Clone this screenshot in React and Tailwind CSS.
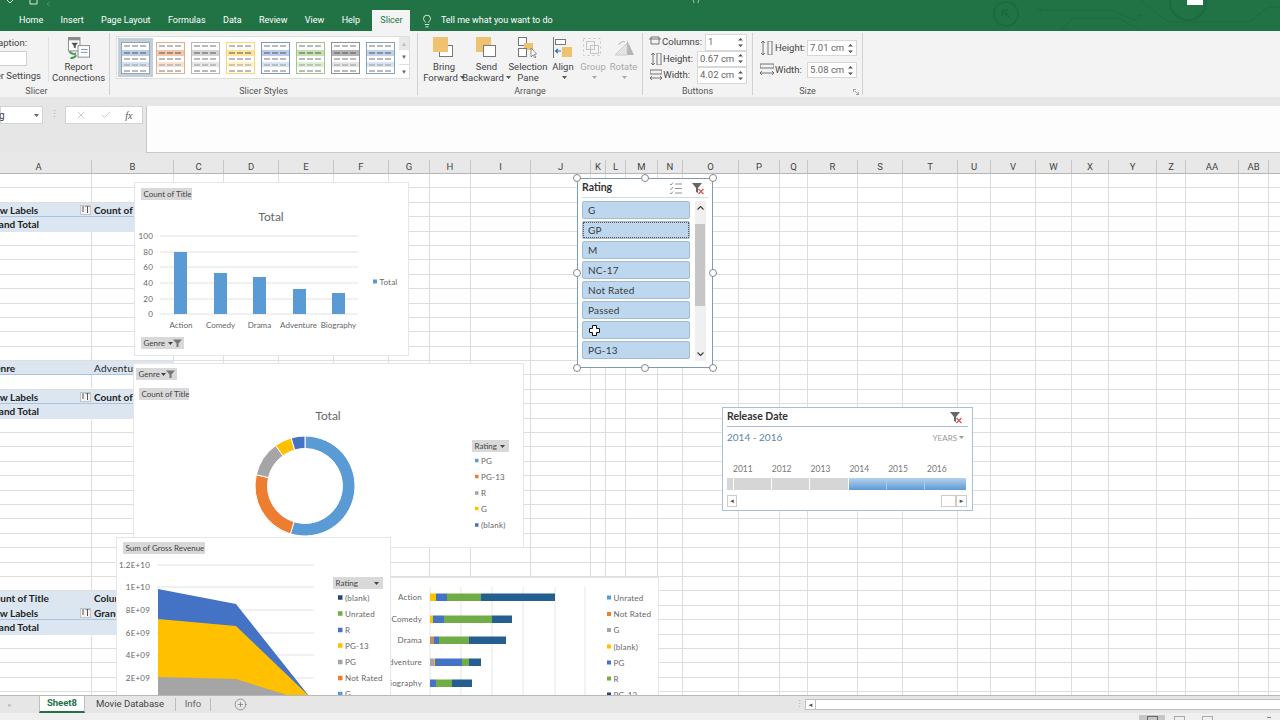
import { CirclePlus, Check, Lightbulb, X } from "lucide-react";

const COLUMNS = ["A","B","C","D","E","F","G","H","I","J","K","L","M","N","O","P","Q","R","S","T","U","V","W","X","Y","Z","AA","AB","AC"];
const gridCols = "grid-cols-[106px_82px_50px_55px_55px_55px_41px_41px_60px_60px_15px_20px_32px_25px_56px_41px_28px_50px_45px_55px_33px_45px_36px_37px_48px_29px_53px_30px_60px]";

const ROW_COUNT = 37;
const pivotRows = {
  2: { a: "Row Labels", b: "Count of Title", filter: true, line: true },
  3: { a: "Grand Total" },
  13: { a: "Genre", b: "Adventure", plain: true, line: true },
  15: { a: "Row Labels", b: "Count of Title", filter: true, line: true },
  16: { a: "Grand Total" },
  29: { a: "Count of Title", b: "Column Labels", narrow: true },
  30: { a: "Row Labels", b: "Grand Total", filter: true, line: true, narrow: true },
  31: { a: "Grand Total" },
};

const swatches = [
  ["#8fa5bb", "#b9cde3", "#d5e0ec"],
  ["#e8ae8a", "#f3c6aa", "#f8e2d4"],
  ["#b9b9b9", "#d4d4d4", "#e6e6e6"],
  ["#fbd56f", "#fde49b", "#fdf0cb"],
  ["#7896c4", "#b9cdea", "#d9e4f3"],
  ["#a3c48c", "#c6e0b4", "#e0eed6"],
  ["#8f8f8f", "#b5b5b5", "#e4e4e4"],
  ["#83a2c8", "#bed2ea", "#d9e5f2"],
];

const ratingItems = ["G", "GP", "M", "NC-17", "Not Rated", "Passed", "", "PG-13"];

function ribbonText(extra) {
  return `text-[9.5px] leading-[11px] text-[#444] ${extra}`;
}

function Swatch({ border, mid, light }) {
  const dash = (y, color) => (
    <line x1="3" x2="26" y1={y} y2={y} stroke={color} strokeWidth="1" strokeDasharray="6 2" />
  );
  return (
    <svg width="29" height="32" viewBox="0 0 29 32">
      <rect x="0.5" y="0.5" width="28" height="31" fill="#fff" stroke={border} />
      <rect x="1" y="8" width="27" height="6" fill={mid} />
      <rect x="1" y="20" width="27" height="5" fill={light} />
      {dash(4, "#777")}
      {dash(11, "#555")}
      {dash(17, "#777")}
      {dash(23, "#999")}
      {dash(29, "#777")}
    </svg>
  );
}

function ClearFilterIcon({ className }) {
  return (
    <svg className={className} width="13" height="13" viewBox="0 0 13 13">
      <path d="M0 1h10L6 6v5L4 10V6z" fill="#666" />
      <path d="M6.5 7l5 5M11.5 7l-5 5" stroke="#d9534f" strokeWidth="1.2" />
    </svg>
  );
}

function MultiSelectIcon() {
  return (
    <svg width="12" height="12" viewBox="0 0 12 12" fill="none" stroke="#888" strokeWidth="0.9">
      <path d="M0 2l1 1 2-2.5M0 6.5l1 1 2-2.5M0 11l1 1 2-2.5M5 2h7M5 6.5h7M5 11h7" />
    </svg>
  );
}

function Spinner({ value, className }) {
  return (
    <div className={`flex items-center justify-between border border-[#d8d8d8] bg-white pl-[2px] pr-[3px] ${className}`}>
      <span className="text-[9.5px] text-[#666]">{value}</span>
      <svg width="5" height="11" viewBox="0 0 5 11" fill="#555">
        <path d="M2.5 1L5 3.5H0zM2.5 10L0 7.5h5z" />
      </svg>
    </div>
  );
}

function Caret({ color = "#555" }) {
  return (
    <svg className="ml-[2px] inline-block" width="5" height="3" viewBox="0 0 5 3" fill={color}>
      <path d="M0 0h5L2.5 3z" />
    </svg>
  );
}

function RibbonButton({ icon, lines, caret, muted, className }) {
  const color = muted ? "text-[#aaa]" : "text-[#444]";
  return (
    <div className={`flex flex-col items-center ${className}`}>
      <div className="h-[24px]">{icon}</div>
      <span className={`text-[9.5px] leading-[11px] whitespace-nowrap ${color}`}>{lines[0]}</span>
      <span className={`flex h-[11px] items-center text-[9.5px] leading-[11px] whitespace-nowrap ${color}`}>
        {lines[1]}
        {caret && <Caret color={muted ? "#aaa" : "#555"} />}
      </span>
    </div>
  );
}

function GroupLabel({ children }) {
  return <div className="h-[9px] text-center text-[9px] leading-[11px] text-[#555]">{children}</div>;
}

function Ribbon() {
  return (
    <div className="flex h-[66px] bg-[#f3f3f3] font-['Roboto',sans-serif]">
      {/* Slicer */}
      <div className="-ml-[35px] mt-[2px] flex h-[62px] w-[145px] flex-col border-r border-[#d2d2d2]">
        <div className="flex h-[53px]">
          <div className="my-[4px] flex w-[84px] flex-col items-end border-r border-[#e0e0e0] pr-[7px]">
            <span className={ribbonText("mr-[14px] whitespace-nowrap")}>Caption:</span>
            <div className="mr-[14px] mt-[3px] h-[15px] w-[28px] border border-[#d0d0d0] bg-white" />
            <span className={ribbonText("mt-[4px] whitespace-nowrap")}>Slicer Settings</span>
          </div>
          <RibbonButton
            className="w-[59px] pt-[4px]"
            lines={["Report", "Connections"]}
            icon={
              <svg width="24" height="23" viewBox="0 0 24 24">
                <rect x="1" y="0.5" width="12" height="14" fill="#fff" stroke="#8a8a8a" />
                <rect x="1" y="0.5" width="12" height="3" fill="#8a8a8a" />
                <path d="M4 6h7L8.5 9v3L6.5 11V9z" fill="#555" />
                <rect x="11" y="9" width="12" height="12" fill="#fff" stroke="#8a8a8a" />
                <path d="M14 13h7M14 16h7" stroke="#6f93c4" />
                <path d="M2 15c2 3 5 3 7 2M3 22c3 0 5-1 6-3" stroke="#4c9a5b" strokeWidth="2" fill="none" />
              </svg>
            }
          />
        </div>
        <GroupLabel>
          <span className="-ml-[1px]">Slicer</span>
        </GroupLabel>
      </div>

      {/* Slicer Styles */}
      <div className="mt-[2px] flex h-[62px] w-[308px] flex-col border-r border-[#d2d2d2]">
        <div className="flex h-[53px] pl-[6px] pt-[3px]">
          <div className="flex h-[43px] w-[294px] border border-[#dedede] bg-white">
            <div className="flex w-[282px] items-center pl-[1px]">
              {swatches.map(([border, mid, light], i) => (
                <div
                  key={i}
                  className={`flex h-[39px] w-[35px] items-center justify-center ${i === 0 ? "bg-[#c3ced9]" : ""}`}
                >
                  <Swatch border={border} mid={mid} light={light} />
                </div>
              ))}
            </div>
            <div className="flex flex-1 flex-col">
              <div className="flex flex-1 items-center justify-center bg-[#e8e8e8] text-[6px] text-[#bbb]">▲</div>
              <div className="flex flex-1 items-center justify-center text-[6px] text-[#666]">▼</div>
              <div className="flex flex-1 items-center justify-center border-t border-[#ddd] text-[6px] text-[#666]">▼</div>
            </div>
          </div>
        </div>
        <GroupLabel>Slicer Styles</GroupLabel>
      </div>

      {/* Arrange */}
      <div className="mt-[2px] flex h-[62px] w-[225px] flex-col border-r border-[#d2d2d2]">
        <div className="flex h-[53px] pl-[5px] pt-[4px]">
          <RibbonButton
            className="w-[42px]"
            lines={["Bring", "Forward"]}
            caret
            icon={
              <svg width="22" height="21" viewBox="0 0 22 21">
                <rect x="6.5" y="8.5" width="13" height="11" fill="#fff" stroke="#777" />
                <rect x="0" y="0" width="15" height="15" fill="#eec271" />
              </svg>
            }
          />
          <RibbonButton
            className="w-[43px]"
            lines={["Send", "Backward"]}
            caret
            icon={
              <svg width="22" height="21" viewBox="0 0 22 21">
                <rect x="0" y="0" width="15" height="15" fill="#eec271" />
                <rect x="7.5" y="8.5" width="12" height="11" fill="#fff" stroke="#777" />
              </svg>
            }
          />
          <RibbonButton
            className="w-[40px]"
            lines={["Selection", "Pane"]}
            icon={
              <svg width="22" height="22" viewBox="0 0 22 22">
                <rect x="1.5" y="0.5" width="8" height="8" fill="#fff" stroke="#777" />
                <rect x="7" y="6" width="9" height="7" fill="#eec271" />
                <rect x="1.5" y="11.5" width="8" height="8" fill="#fff" stroke="#777" />
                <path d="M14 11v9l2-2 2 3 1-1-2-2.500 2.500-.500z" fill="#fff" stroke="#666" strokeWidth="0.7" />
              </svg>
            }
          />
          <RibbonButton
            className="w-[30px]"
            lines={["Align", ""]}
            caret
            icon={
              <svg width="22" height="22" viewBox="0 0 22 22">
                <path d="M1.500 0v21" stroke="#777" />
                <rect x="3.500" y="2.500" width="10" height="5" fill="#fff" stroke="#777" />
                <rect x="10" y="10" width="10" height="10" fill="#eec271" />
                <path d="M9 14H4M6 12l-2.500 2L6 16" stroke="#2b6fb3" strokeWidth="1.2" fill="none" />
              </svg>
            }
          />
          <RibbonButton
            className="w-[30px]"
            lines={["Group", ""]}
            caret
            muted
            icon={
              <svg width="22" height="22" viewBox="0 0 22 22" fill="none" stroke="#c4c4c4">
                <rect x="1.500" y="1.500" width="17" height="17" strokeDasharray="2 3" />
                <rect x="4.500" y="4.500" width="8" height="8" />
                <rect x="8.500" y="8.500" width="8" height="8" />
              </svg>
            }
          />
          <RibbonButton
            className="w-[31px]"
            lines={["Rotate", ""]}
            caret
            muted
            icon={
              <svg width="22" height="22" viewBox="0 0 22 22">
                <path d="M14 3l7 15h-7z" fill="#b5b5b5" />
                <path d="M2 18L14 6v12z" fill="#e4e4e4" stroke="#ccc" />
                <path d="M6 8c1-3 4-4 6-3" stroke="#aaa" fill="none" />
              </svg>
            }
          />
        </div>
        <GroupLabel>Arrange</GroupLabel>
      </div>

      {/* Buttons */}
      <div className="mt-[2px] flex h-[62px] w-[110px] flex-col border-r border-[#d2d2d2]">
        <div className="flex h-[53px] flex-col items-end pr-[5px] pt-[1px]">
          {[
            ["Columns:", "1", "w-[42px]", "M0 3h12M2 1h8v7H2z", "mr-[3px]"],
            ["Height:", "0.67 cm", "w-[50px]", "M3 0v12M1 2l2-2 2 2M1 10l2 2 2-2M7 0h4v12H7z", "mr-[4px]"],
            ["Width:", "4.02 cm", "w-[50px]", "M0 1h12v4H0zM0 9h12M2 7l-2 2 2 2M10 7l2 2-2 2", "mr-[7px]"],
          ].map(([label, value, width, icon, gap]) => (
            <div key={label} className="flex h-[16.500px] w-full items-center justify-end">
              <svg className="mr-[1px]" width="12" height="12" viewBox="0 0 12 12" fill="none" stroke="#666" strokeWidth="0.9">
                <path d={icon} />
              </svg>
              <span className={`${gap} text-[9.5px] text-[#444]`}>{label}</span>
              <Spinner value={value} className={`h-[16.500px] ${width}`} />
            </div>
          ))}
        </div>
        <GroupLabel>Buttons</GroupLabel>
      </div>

      {/* Size */}
      <div className="mt-[2px] flex h-[62px] w-[110px] flex-col border-r border-[#d2d2d2]">
        <div className="flex h-[53px] flex-col gap-[6px] pl-[7px] pt-[7px]">
          {[
            ["Height:", "7.01 cm", "M3 0v14M1 2l2-2 2 2M1 12l2 2 2-2M8 0h4v14H8z"],
            ["Width:", "5.08 cm", "M0 1h14v4H0zM0 10h14M2 8l-2 2 2 2M12 8l2 2-2 2"],
          ].map(([label, value, icon]) => (
            <div key={label} className="flex h-[16px] items-center">
              <svg width="14" height="14" viewBox="0 0 14 14" fill="none" stroke="#666" strokeWidth="0.9">
                <path d={icon} />
              </svg>
              <span className="ml-[1px] w-[32px] text-[9.5px] text-[#444]">{label}</span>
              <Spinner value={value} className="h-[16px] w-[50px]" />
            </div>
          ))}
        </div>
        <div className="relative">
          <GroupLabel>Size</GroupLabel>
          <svg className="absolute right-[3px] top-[3px]" width="6" height="6" viewBox="0 0 6 6" fill="none" stroke="#888" strokeWidth="0.7">
            <path d="M0 .5h3M.5 0v3M2 2l3.500 3.500M5.500 3v2.500H3" />
          </svg>
        </div>
      </div>
    </div>
  );
}

function TitleBar() {
  const tabs = ["Home", "Insert", "Page Layout", "Formulas", "Data", "Review", "View", "Help"];
  return (
    <div className="relative flex h-[31px] flex-col bg-[#217346] font-['Roboto',sans-serif]">
      <svg className="absolute left-0 top-0" width="1280" height="31" viewBox="0 0 1280 31" fill="none">
        <path d="M7 0l3 3 3-3M30 0v4h7V0" stroke="#d7e6dc" strokeWidth="1" />
        <path d="M50 2l-3 2 3 2" stroke="#4d8f6b" strokeWidth="1" />
        <path d="M693 0c1 2 1 2 1 3M699 0c-1 2-1 2-1 3" stroke="#cfe3d6" strokeWidth="0.8" />
        <circle cx="1006" cy="14" r="12" stroke="#1c6a3f" strokeWidth="2" />
        <path d="M1002 10l8 8M1002 10h6M1002 10v6" stroke="#1c6a3f" strokeWidth="2" />
        <circle cx="1039" cy="10" r="2" stroke="#1c6a3f" />
        <path d="M1041 10h70l26 11M1061 30l12-12h46l20 12" stroke="#1c6a3f" strokeWidth="1" />
        <circle cx="1139" cy="17" r="2" stroke="#1c6a3f" />
        <path d="M1140 0l28 22h82l18-15h12" stroke="#1c6a3f" strokeWidth="1" />
        <circle cx="1188" cy="2" r="18" stroke="#1c6a3f" strokeWidth="2" />
        <rect x="1187" y="0" width="16" height="5" fill="#fff" />
      </svg>
      <div className="relative mt-[10px] flex h-[21px] items-center gap-[17.400px] pl-[19px]">
        {tabs.map((label) => (
          <span key={label} className="text-[9px] text-white">
            {label}
          </span>
        ))}
        <div className="-ml-[5px] flex h-[21px] w-[38px] items-center justify-center bg-[#f3f3f3] text-[9px] text-[#217346]">
          Slicer
        </div>
        <div className="-ml-[8px] flex items-center gap-[7px]">
          <Lightbulb className="text-white" size={14} strokeWidth={1.4} />
          <span className="text-[9px] text-white">Tell me what you want to do</span>
        </div>
      </div>
    </div>
  );
}

function FormulaBar() {
  return (
    <div className="flex h-[56px] bg-[#e6e6e6] font-['Roboto',sans-serif]">
      <div className="mt-[9px] flex h-[18px] w-[43px] items-center justify-between border border-[#d4d4d4] bg-white pr-[3px]">
        <span className="-ml-[2px] text-[10px] text-[#444]">g</span>
        <Caret color="#666" />
      </div>
      <div className="mt-[9px] flex h-[18px] w-[22px] items-center justify-center text-[9px] text-[#aaa]">⋮</div>
      <div className="mt-[9px] flex h-[18px] w-[78px] items-center justify-around border border-[#d4d4d4] bg-white px-[3px]">
        <X size={12} strokeWidth={1.3} className="text-[#b0b0b0]" />
        <Check size={12} strokeWidth={1.3} className="text-[#b0b0b0]" />
        <span className="font-['Liberation_Serif',serif] text-[10px] italic text-[#555]">fx</span>
      </div>
      <div className="ml-[3px] mt-[9px] h-[47px] flex-1 border-b border-l border-[#c8c8c8] bg-[#fdfdfd]" />
    </div>
  );
}

function ColumnHeader() {
  return (
    <div className="-ml-[14px] h-[21px] w-[1343px] border-b border-[#b5b5b5] bg-[#e8e8e8] pt-[7px] font-['Roboto',sans-serif]">
      <div className={`grid h-[13px] ${gridCols}`}>
        {COLUMNS.map((col) => (
          <div key={col} className="flex items-center justify-center border-r border-[#c6c6c6] text-[9.5px] leading-none text-[#444]">
            {col}
          </div>
        ))}
      </div>
    </div>
  );
}

function FilterBox() {
  return (
    <div className="absolute right-[1px] top-[2px] flex h-[10px] w-[11px] items-center justify-center border border-[#c4c4c4] bg-[#f3f3f3]">
      <svg width="8" height="7" viewBox="0 0 8 7" fill="none" stroke="#555" strokeWidth="1">
        <path d="M1 0v6M3 0h5M5.500 0v7" />
      </svg>
    </div>
  );
}

function SheetGrid() {
  return (
    <div className={`-ml-[14px] grid w-[1343px] auto-rows-[14.4px] ${gridCols} font-['Lato',sans-serif]`}>
      {Array.from({ length: ROW_COUNT }).flatMap((_, r) =>
        COLUMNS.map((col, c) => {
          const pivot = pivotRows[r];
          if (pivot && c < 2) {
            const weight = pivot.plain && c === 1 ? "font-normal tracking-[0.3px]" : "font-bold";
            const line = pivot.line ? "border-b border-[#a9c4e0]" : "";
            return (
              <div
                key={`${col}${r}`}
                className={`relative whitespace-nowrap bg-[#dce6f1] pl-[2px] text-[10px] leading-[14px] text-[#222] ${weight} ${line}`}
              >
                {c === 0 ? (
                  pivot.a
                ) : (
                  <span className={`block overflow-hidden ${pivot.narrow ? "w-[22px]" : "w-[40px]"}`}>{pivot.b}</span>
                )}
                {c === 0 && pivot.filter && <FilterBox />}
              </div>
            );
          }
          return <div key={`${col}${r}`} className="border-b border-r border-[#dedede]" />;
        })
      )}
    </div>
  );
}

function ChartButton({ x, y, w, label, filter, caret }) {
  return (
    <g>
      <rect x={x} y={y} width={w} height="12" fill="#d9d9d9" />
      <text x={x + 2.500} y={y + 9} fontSize="8" fill="#444">{label}</text>
      {caret && <path d={`M${x + w - (filter ? 16 : 9)} ${y + 5}h5l-2.500 3z`} fill="#444" />}
      {filter && <path d={`M${x + w - 11} ${y + 2.500}h9l-3.500 4v3.500h-2v-3.500z`} fill="#777" />}
    </g>
  );
}

function Legend({ x, items, size = 4 }) {
  return items.map(([label, color, y]) => (
    <g key={label}>
      <rect x={x} y={y - size / 2} width={size} height={size} fill={color} />
      <text x={x + size + 2.500} y={y + 3} fontSize="8" letterSpacing="0.2" fill="#666">{label}</text>
    </g>
  ));
}

function ColumnChart() {
  const ticks = [[100, 236], [80, 252], [60, 267], [40, 283], [20, 299], [0, 314]];
  const bars = [
    ["Action", 174, 252, 181],
    ["Comedy", 214, 273, 220.500],
    ["Drama", 253, 277, 259.500],
    ["Adventure", 293, 289, 298.500],
    ["Biography", 332, 293, 338.500],
  ];
  return (
    <div className="absolute left-[134px] top-[8px] h-[174px] w-[275px] border border-[#e6e6e6] bg-white">
      <svg className="font-['Lato',sans-serif]" width="273" height="172" viewBox="135 183 273 172">
        <ChartButton x={141} y={188} w={51} label="Count of Title" />
        <text x={271} y={221} fontSize="12" textAnchor="middle" fill="#666">Total</text>
        {ticks.map(([v, y]) => (
          <g key={v}>
            <line x1="160" x2="358" y1={y} y2={y} stroke="#e2e2e2" />
            <text x={153} y={y + 3} fontSize="8" textAnchor="end" letterSpacing="0.2" fill="#666">{v}</text>
          </g>
        ))}
        {bars.map(([label, x, top, cx]) => (
          <g key={label}>
            <rect x={x} y={top} width="13" height={314 - top} fill="#5b9bd5" />
            <text x={cx} y={328} fontSize="8" textAnchor="middle" fill="#666">{label}</text>
          </g>
        ))}
        <Legend x={373} items={[["Total", "#5b9bd5", 281.500]]} />
        <ChartButton x={141} y={337} w={43} label="Genre" filter caret />
      </svg>
    </div>
  );
}

function arcPath(cx, cy, outer, inner, from, to) {
  const pt = (r, deg) => {
    const a = ((deg - 90) * Math.PI) / 180;
    return `${cx + r * Math.cos(a)} ${cy + r * Math.sin(a)}`;
  };
  const large = to - from > 180 ? 1 : 0;
  return `M${pt(outer, from)}A${outer} ${outer} 0 ${large} 1 ${pt(outer, to)}L${pt(inner, to)}A${inner} ${inner} 0 ${large} 0 ${pt(inner, from)}Z`;
}

function DoughnutChart() {
  const slices = [
    ["#5b9bd5", 0, 197],
    ["#ed7d31", 197, 283],
    ["#a5a5a5", 283, 324],
    ["#ffc000", 324, 344],
    ["#4472c4", 344, 360],
  ];
  return (
    <div className="absolute left-[133px] top-[189px] h-[185px] w-[391px] border border-[#e6e6e6] bg-white">
      <svg className="font-['Lato',sans-serif]" width="389" height="183" viewBox="134 364 389 183">
        <ChartButton x={136} y={368} w={41} label="Genre" filter caret />
        <ChartButton x={139} y={388} w={50} label="Count of Title" />
        <text x={328} y={419.500} fontSize="12" textAnchor="middle" fill="#666">Total</text>
        {slices.map(([color, from, to]) => (
          <path key={color} d={arcPath(305, 486, 50, 37.500, from, to)} fill={color} stroke="#fff" strokeWidth="1" />
        ))}
        <ChartButton x={472} y={440} w={37} label="Rating" caret />
        <Legend
          x={475}
          size={3.500}
          items={[
            ["PG", "#5b9bd5", 460.500],
            ["PG-13", "#ed7d31", 476.500],
            ["R", "#a5a5a5", 493],
            ["G", "#ffc000", 508.500],
            ["(blank)", "#4472c4", 525],
          ]}
        />
      </svg>
    </div>
  );
}

function AreaChart() {
  const ticks = [["1.2E+10", 565], ["1E+10", 587], ["8E+09", 610], ["6E+09", 633], ["4E+09", 655], ["2E+09", 678]];
  return (
    <div className="absolute left-[116px] top-[363px] h-[170px] w-[275px] border border-[#e6e6e6] bg-white">
      <svg className="font-['Lato',sans-serif]" width="273" height="168" viewBox="117 538 273 168">
        <ChartButton x={123} y={542} w={82} label="Sum of Gross Revenue" />
        {ticks.map(([v, y]) => (
          <g key={v}>
            <line x1="157" x2="314" y1={y} y2={y} stroke="#e2e2e2" />
            <text x={150} y={y + 3} fontSize="8" textAnchor="end" letterSpacing="0.2" fill="#666">{v}</text>
          </g>
        ))}
        <path d="M158 589L236 604L309 696H158z" fill="#4472c4" />
        <path d="M158 619L236 626L309 696H158z" fill="#ffc000" />
        <path d="M158 677L236 679L290 696H158z" fill="#a5a5a5" />
        <ChartButton x={333} y={577} w={50} label="Rating" caret />
        <Legend
          x={338}
          size={4.500}
          items={[
            ["(blank)", "#264478", 597.500],
            ["Unrated", "#70ad47", 613.500],
            ["R", "#4472c4", 630],
            ["PG-13", "#ffc000", 645.500],
            ["PG", "#a5a5a5", 662],
            ["Not Rated", "#ed7d31", 678],
            ["G", "#5b9bd5", 694],
          ]}
        />
      </svg>
    </div>
  );
}

function StackedChart() {
  const rows = [
    ["Action", 597, [["#ffc000", 430, 436], ["#4472c4", 436, 447], ["#70ad47", 447, 481], ["#255e91", 481, 555]]],
    ["Comedy", 619, [["#ffc000", 430, 433], ["#4472c4", 433, 444], ["#70ad47", 444, 492], ["#255e91", 492, 512]]],
    ["Drama", 640, [["#c98a5e", 430, 434], ["#4472c4", 434, 439], ["#70ad47", 439, 469], ["#255e91", 469, 506]]],
    ["Adventure", 662, [["#a5a5a5", 430, 434], ["#ffc000", 434, 435], ["#4472c4", 435, 462], ["#70ad47", 462, 469], ["#255e91", 469, 481]]],
    ["Biography", 683, [["#4472c4", 430, 436], ["#70ad47", 436, 452], ["#255e91", 452, 472]]],
  ];
  return (
    <div className="absolute left-[380px] top-[403px] h-[130px] w-[279px] border border-[#e6e6e6] bg-white">
      <svg className="font-['Lato',sans-serif]" width="277" height="128" viewBox="381 578 277 128">
        {[430, 461, 492, 523, 555, 585].map((x) => (
          <line key={x} x1={x} x2={x} y1="587" y2="696" stroke="#e6e6e6" />
        ))}
        {rows.map(([label, y, segments]) => (
          <g key={label}>
            <text x={422} y={y + 3} fontSize="8" textAnchor="end" letterSpacing="0.2" fill="#666">{label}</text>
            {segments.map(([color, from, to]) => (
              <rect key={color} x={from} y={y - 3.500} width={to - from} height="7.500" fill={color} />
            ))}
          </g>
        ))}
        <Legend
          x={607}
          items={[
            ["Unrated", "#5b9bd5", 597.500],
            ["Not Rated", "#ed7d31", 614],
            ["G", "#a5a5a5", 630],
            ["(blank)", "#ffc000", 646.500],
            ["PG", "#4472c4", 662.500],
            ["R", "#70ad47", 678.500],
            ["PG-13", "#264478", 694.500],
          ]}
        />
      </svg>
    </div>
  );
}

function Handles({ points }) {
  return points.map(([left, top], i) => (
    <div
      key={i}
      style={{ left, top }}
      className="absolute h-[8px] w-[8px] -translate-x-1/2 -translate-y-1/2 rounded-full border border-[#888] bg-white"
    />
  ));
}

function RatingSlicer() {
  return (
    <div className="absolute left-[577px] top-[4px] flex h-[190px] w-[136px] flex-col border border-[#7f9ab2] bg-white px-[4px] font-['Lato',sans-serif]">
      <div className="flex h-[19px] items-center justify-between border-b border-[#cfdbe5] pr-[3px]">
        <span className="text-[10.5px] font-bold text-[#333]">Rating</span>
        <div className="flex items-center gap-[10px]">
          <MultiSelectIcon />
          <ClearFilterIcon />
        </div>
      </div>
      <div className="mt-[3px] flex gap-[5px]">
        <div className="flex w-[108px] flex-col gap-[2px]">
          {ratingItems.map((item, i) => (
            <div
              key={i}
              className={`flex h-[18px] items-center rounded-[2px] border border-[#a5bccf] bg-[#bdd7ee] pl-[5px] text-[10px] tracking-[0.2px] text-[#3a3a3a] ${
                item === "GP" ? "outline-1 -outline-offset-2 outline-dotted outline-[#555]" : ""
              }`}
            >
              {item}
              {i === 6 && (
                <svg className="ml-[1px]" width="11" height="11" viewBox="0 0 11 11">
                  <path d="M3.500.5h4v3h3v4h-3v3h-4v-3h-3v-4h3z" fill="#fff" stroke="#111" />
                </svg>
              )}
            </div>
          ))}
        </div>
        <div className="relative flex h-[160px] w-[11px] flex-col items-center justify-between bg-[#f0f0f0] text-[#444]">
          <svg className="mt-[5px]" width="7" height="4" viewBox="0 0 7 4" fill="none" stroke="#444" strokeWidth="1.200">
            <path d="M.5 3.500l3-3 3 3" />
          </svg>
          <div className="absolute left-0 top-[23px] h-[82px] w-[10px] bg-[#c6c6c6]" />
          <svg className="mb-[5px]" width="7" height="4" viewBox="0 0 7 4" fill="none" stroke="#444" strokeWidth="1.200">
            <path d="M.5.5l3 3 3-3" />
          </svg>
        </div>
      </div>
      <Handles
        points={[
          [-1, -1], [67, -1], [135, -1],
          [-1, 94], [135, 94],
          [-1, 189], [67, 189], [135, 189],
        ]}
      />
    </div>
  );
}

function ReleaseSlicer() {
  const years = ["2011", "2012", "2013", "2014", "2015", "2016"];
  return (
    <div className="absolute left-[722px] top-[233px] flex h-[104px] w-[251px] flex-col border border-[#a9c0d2] bg-white px-[4px] font-['Lato',sans-serif]">
      <div className="flex h-[19px] items-center justify-between border-b border-[#a9c0d2] pr-[5px]">
        <span className="text-[10.5px] font-bold text-[#333]">Release Date</span>
        <ClearFilterIcon />
      </div>
      <div className="mt-[3px] flex items-center justify-between pr-[4px]">
        <span className="text-[10px] text-[#5a86ad]">2014 - 2016</span>
        <span className="flex items-center text-[8px] text-[#999]">
          YEARS
          <Caret color="#999" />
        </span>
      </div>
      <div className="mt-[18px] flex">
        {years.map((y) => (
          <span key={y} className="w-[38.800px] pl-[6px] text-[8.5px] text-[#777]">
            {y}
          </span>
        ))}
      </div>
      <div className="mt-[2px] flex h-[12px] w-[239px] gap-[1px]">
        <div className="w-[6px] bg-[#d6d6d6]" />
        <div className="w-[37px] bg-[#d6d6d6]" />
        <div className="w-[37px] bg-[#d6d6d6]" />
        <div className="w-[38px] bg-[#d6d6d6]" />
        <div className="flex flex-1 bg-gradient-to-b from-[#b5d1ee] to-[#5b9bd5]">
          <div className="w-[38px] border-r border-[#a8cbea]" />
          <div className="w-[38px] border-r border-[#a8cbea]" />
        </div>
      </div>
      <div className="mt-[5px] flex h-[12px] w-[240px] items-center justify-between">
        <div className="flex h-[12px] w-[10px] items-center justify-center border border-[#ccc] text-[6px] text-[#555]">◄</div>
        <div className="flex">
          <div className="h-[12px] w-[15px] border border-[#ccc]" />
          <div className="flex h-[12px] w-[11px] items-center justify-center border border-[#ccc] text-[6px] text-[#555]">►</div>
        </div>
      </div>
    </div>
  );
}

function SheetTabs() {
  return (
    <div className="flex h-[18px] border-t border-[#b8b8b8] bg-[#e6e6e6] font-['Roboto',sans-serif]">
      <div className="flex w-[39px] items-center pl-[7px] text-[6px] text-[#c0c0c0]">►</div>
      <div className="flex w-[46px] items-center justify-center border-x border-b-2 border-[#c0c0c0] border-b-[#217346] bg-white text-[9.5px] font-bold text-[#217346]">
        Sheet8
      </div>
      <div className="my-[2px] flex w-[91px] items-center justify-center border-r border-[#bdbdbd] text-[9.5px] text-[#444]">
        Movie Database
      </div>
      <div className="my-[2px] flex w-[35px] items-center justify-center border-r border-[#bdbdbd] text-[9.5px] text-[#666]">
        Info
      </div>
      <div className="flex w-[583px] items-center pl-[23px]">
        <CirclePlus size={13} strokeWidth={1} className="text-[#555]" />
      </div>
      <div className="flex w-[11px] items-center justify-center text-[9px] text-[#aaa]">⋮</div>
      <div className="my-[3px] flex flex-1 border-y border-l border-[#c0c0c0] bg-white">
        <div className="flex w-[10px] items-center justify-center border-r border-[#c0c0c0] text-[6px] text-[#555]">◄</div>
      </div>
    </div>
  );
}

function StatusBar() {
  return (
    <div className="flex h-[7px] items-start overflow-hidden bg-[#efefef] pl-[1139px]">
      <div className="mt-[2px] flex h-[5px] w-[26px] justify-center bg-[#c6c6c6] pt-[1px]">
        <div className="h-[8px] w-[11px] border border-[#666]" />
      </div>
      <div className="ml-[9px] mt-[3px] h-[8px] w-[11px] border border-[#aaa]" />
      <div className="ml-[17px] mt-[3px] h-[8px] w-[11px] border border-[#aaa]" />
      <div className="ml-[54px] mt-[4px] h-[1px] w-[4px] bg-[#888]" />
    </div>
  );
}

export default function App() {
  return (
    <div className="flex h-[720px] w-[1280px] flex-col overflow-hidden bg-white">
      <TitleBar />
      <Ribbon />
      <FormulaBar />
      <ColumnHeader />
      <div className="relative h-[521px] overflow-hidden">
        <SheetGrid />
        <StackedChart />
        <ColumnChart />
        <DoughnutChart />
        <AreaChart />
        <RatingSlicer />
        <ReleaseSlicer />
      </div>
      <SheetTabs />
      <StatusBar />
    </div>
  );
}
